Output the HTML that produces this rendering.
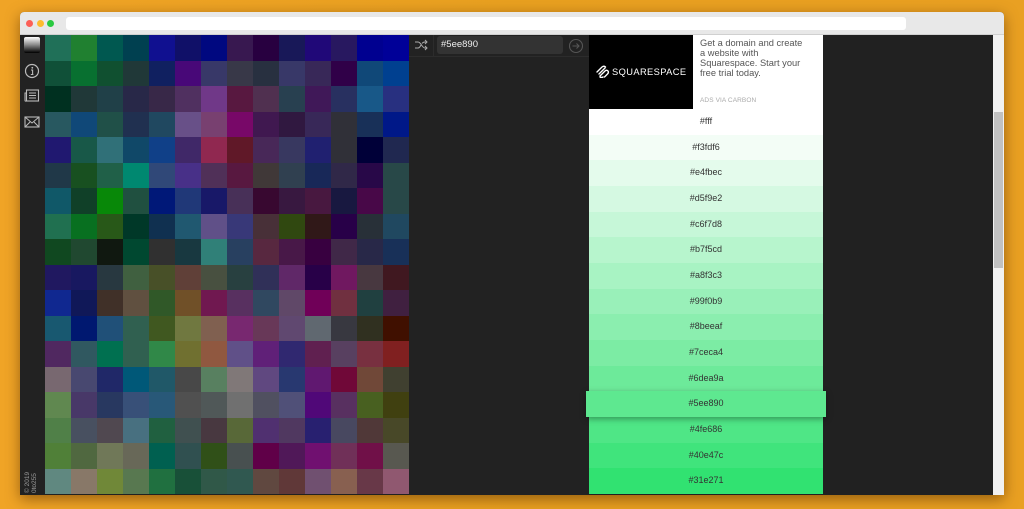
<!DOCTYPE html>
<html><head><meta charset="utf-8"><style>
*{margin:0;padding:0;box-sizing:border-box}
body{width:1024px;height:509px;overflow:hidden;background:linear-gradient(90deg,#f0a426,#e8a020 50%,#e9a022);font-family:"Liberation Sans",sans-serif;position:relative}
.win{position:absolute;left:20px;top:12px;width:984px;height:483px;background:#212121;box-shadow:0 4px 14px rgba(80,40,0,.55);border-radius:4px 4px 0 0;overflow:hidden}
.bar{position:absolute;left:0;top:0;width:984px;height:23px;background:#e8e8e8;border-bottom:1px solid #d0d0d0}
.dot{position:absolute;top:8px;width:7px;height:7px;border-radius:50%}
.url{position:absolute;left:46px;top:5px;width:840px;height:13px;background:#fff;border-radius:3px}
.side{position:absolute;left:0;top:23px;width:25px;height:460px;background:#222}
.grid{position:absolute;left:25px;top:23px;width:364px;height:459px;display:grid;grid-template-columns:repeat(14,26px);grid-template-rows:repeat(18,25.5px)}
.mid{position:absolute;left:389px;top:23px;width:180px;height:460px;background:#222}
.inp{position:absolute;left:28px;top:1px;width:126px;height:18px;background:#333;border-radius:3px;color:#eee;font-size:9.5px;line-height:18px;padding-left:4px}
.ad{position:absolute;left:569px;top:23px;width:234px;height:74px;background:#fff}
.adl{position:absolute;left:0;top:0;width:104px;height:74px;background:#000;color:#fff;font-size:9.3px;letter-spacing:.4px;line-height:74px;padding-left:23px;white-space:nowrap;overflow:hidden}
.adt{position:absolute;left:111px;top:3px;width:122px;font-size:9.3px;line-height:10px;color:#555;white-space:nowrap}
.ads{position:absolute;left:111px;top:62px;font-size:6.5px;color:#aaa;letter-spacing:.1px}
.list{position:absolute;left:569px;top:97px;width:234px}
.list div{height:25.67px;line-height:25.67px;text-align:center;font-size:9px;color:#333}
.sel{position:relative;left:-3px;width:240px;box-shadow:0 2px 6px rgba(0,0,0,.35);z-index:2}
.sb{position:absolute;left:973px;top:23px;width:11px;height:460px;background:#f1f1f1}
.th{position:absolute;left:1px;top:77px;width:9px;height:156px;background:#c1c1c1}
</style></head><body>
<div class="win">
<div class="bar"><div class="dot" style="left:6px;background:#fc5f57"></div><div class="dot" style="left:17px;background:#fdbb2e"></div><div class="dot" style="left:27px;background:#29c940"></div><div class="url"></div></div>
<div class="side">
<div style="position:absolute;left:4px;top:2px;width:16px;height:16px;border-radius:2px;background:linear-gradient(#fff,#888 50%,#000)"></div>
<svg style="position:absolute;left:4px;top:28px" width="16" height="16" viewBox="0 0 16 16"><circle cx="8" cy="8" r="6.5" fill="none" stroke="#bbb" stroke-width="1.2"/><circle cx="8.3" cy="4.8" r=".9" fill="#bbb"/><path d="M7 7h1.6v4.5M6.8 11.5h2.6" stroke="#bbb" stroke-width="1.1" fill="none"/></svg>
<svg style="position:absolute;left:4px;top:54px" width="16" height="14" viewBox="0 0 16 14"><rect x="2.5" y="1" width="12" height="11" fill="none" stroke="#bbb" stroke-width="1.1"/><path d="M2.5 4H1v7.5q0 1 1.5 .5M5 4h7M5 6.5h7M5 9h7" stroke="#bbb" stroke-width="1" fill="none"/></svg>
<svg style="position:absolute;left:4px;top:81px" width="16" height="12" viewBox="0 0 16 12"><rect x="1" y="1" width="14" height="10" fill="none" stroke="#bbb" stroke-width="1.1"/><path d="M1 1l7 6 7-6M1 11l5-5M15 11l-5-5" stroke="#bbb" stroke-width="1" fill="none"/></svg>
<div style="position:absolute;left:4px;top:420px;width:20px;height:40px;"><div style="transform:rotate(-90deg);transform-origin:0 0;position:absolute;left:0;top:38px;font-size:6.5px;line-height:7px;color:#999;white-space:nowrap">© 2019<br>0to255</div></div>
</div>
<div class="grid">
<div style="background:#207058"></div><div style="background:#208030"></div><div style="background:#005850"></div><div style="background:#004050"></div><div style="background:#101090"></div><div style="background:#101068"></div><div style="background:#000880"></div><div style="background:#381850"></div><div style="background:#280040"></div><div style="background:#181858"></div><div style="background:#200878"></div><div style="background:#281860"></div><div style="background:#000090"></div><div style="background:#000098"></div>
<div style="background:#105038"></div><div style="background:#087030"></div><div style="background:#105030"></div><div style="background:#203838"></div><div style="background:#102060"></div><div style="background:#480878"></div><div style="background:#383868"></div><div style="background:#383848"></div><div style="background:#283040"></div><div style="background:#383868"></div><div style="background:#382858"></div><div style="background:#300048"></div><div style="background:#104878"></div><div style="background:#004090"></div>
<div style="background:#003020"></div><div style="background:#203838"></div><div style="background:#204048"></div><div style="background:#282848"></div><div style="background:#382848"></div><div style="background:#503060"></div><div style="background:#703888"></div><div style="background:#581840"></div><div style="background:#503050"></div><div style="background:#284050"></div><div style="background:#401858"></div><div style="background:#283060"></div><div style="background:#185888"></div><div style="background:#283080"></div>
<div style="background:#285860"></div><div style="background:#104878"></div><div style="background:#205048"></div><div style="background:#203050"></div><div style="background:#204860"></div><div style="background:#685088"></div><div style="background:#784070"></div><div style="background:#780868"></div><div style="background:#401850"></div><div style="background:#301840"></div><div style="background:#382858"></div><div style="background:#303038"></div><div style="background:#183058"></div><div style="background:#001888"></div>
<div style="background:#201870"></div><div style="background:#185848"></div><div style="background:#307078"></div><div style="background:#104868"></div><div style="background:#104088"></div><div style="background:#402868"></div><div style="background:#902850"></div><div style="background:#601828"></div><div style="background:#482858"></div><div style="background:#383860"></div><div style="background:#202070"></div><div style="background:#303038"></div><div style="background:#000038"></div><div style="background:#202850"></div>
<div style="background:#203848"></div><div style="background:#185020"></div><div style="background:#206048"></div><div style="background:#008870"></div><div style="background:#304878"></div><div style="background:#483088"></div><div style="background:#503058"></div><div style="background:#581840"></div><div style="background:#403838"></div><div style="background:#304050"></div><div style="background:#182858"></div><div style="background:#302848"></div><div style="background:#280848"></div><div style="background:#284848"></div>
<div style="background:#105868"></div><div style="background:#104028"></div><div style="background:#088808"></div><div style="background:#205040"></div><div style="background:#001878"></div><div style="background:#203878"></div><div style="background:#181868"></div><div style="background:#483058"></div><div style="background:#380830"></div><div style="background:#381840"></div><div style="background:#481840"></div><div style="background:#181840"></div><div style="background:#480848"></div><div style="background:#284848"></div>
<div style="background:#207050"></div><div style="background:#087020"></div><div style="background:#285818"></div><div style="background:#003828"></div><div style="background:#103050"></div><div style="background:#205870"></div><div style="background:#605088"></div><div style="background:#383878"></div><div style="background:#483038"></div><div style="background:#304810"></div><div style="background:#301818"></div><div style="background:#280048"></div><div style="background:#283038"></div><div style="background:#204860"></div>
<div style="background:#104820"></div><div style="background:#204830"></div><div style="background:#101810"></div><div style="background:#004830"></div><div style="background:#303030"></div><div style="background:#183840"></div><div style="background:#308078"></div><div style="background:#284060"></div><div style="background:#582840"></div><div style="background:#481848"></div><div style="background:#380040"></div><div style="background:#402848"></div><div style="background:#282848"></div><div style="background:#183058"></div>
<div style="background:#201860"></div><div style="background:#181860"></div><div style="background:#283840"></div><div style="background:#406040"></div><div style="background:#485028"></div><div style="background:#604038"></div><div style="background:#485040"></div><div style="background:#284040"></div><div style="background:#303058"></div><div style="background:#602868"></div><div style="background:#280048"></div><div style="background:#701860"></div><div style="background:#483840"></div><div style="background:#401820"></div>
<div style="background:#102890"></div><div style="background:#101858"></div><div style="background:#403028"></div><div style="background:#605040"></div><div style="background:#305828"></div><div style="background:#705028"></div><div style="background:#701850"></div><div style="background:#583060"></div><div style="background:#304860"></div><div style="background:#604868"></div><div style="background:#700058"></div><div style="background:#703040"></div><div style="background:#204040"></div><div style="background:#402040"></div>
<div style="background:#185870"></div><div style="background:#001870"></div><div style="background:#205078"></div><div style="background:#306050"></div><div style="background:#405820"></div><div style="background:#707840"></div><div style="background:#806050"></div><div style="background:#782870"></div><div style="background:#683858"></div><div style="background:#604870"></div><div style="background:#606870"></div><div style="background:#383840"></div><div style="background:#303020"></div><div style="background:#401000"></div>
<div style="background:#502860"></div><div style="background:#305860"></div><div style="background:#007050"></div><div style="background:#306050"></div><div style="background:#308848"></div><div style="background:#707030"></div><div style="background:#905840"></div><div style="background:#605088"></div><div style="background:#602078"></div><div style="background:#302870"></div><div style="background:#602050"></div><div style="background:#584060"></div><div style="background:#783040"></div><div style="background:#802020"></div>
<div style="background:#786870"></div><div style="background:#484870"></div><div style="background:#202868"></div><div style="background:#005878"></div><div style="background:#205868"></div><div style="background:#484848"></div><div style="background:#588060"></div><div style="background:#807878"></div><div style="background:#604880"></div><div style="background:#283870"></div><div style="background:#601870"></div><div style="background:#700838"></div><div style="background:#704838"></div><div style="background:#404030"></div>
<div style="background:#608850"></div><div style="background:#483868"></div><div style="background:#283860"></div><div style="background:#385078"></div><div style="background:#285878"></div><div style="background:#505050"></div><div style="background:#505858"></div><div style="background:#707070"></div><div style="background:#505060"></div><div style="background:#505078"></div><div style="background:#500878"></div><div style="background:#583060"></div><div style="background:#486020"></div><div style="background:#404010"></div>
<div style="background:#508048"></div><div style="background:#485060"></div><div style="background:#504850"></div><div style="background:#487080"></div><div style="background:#206040"></div><div style="background:#405050"></div><div style="background:#483840"></div><div style="background:#586838"></div><div style="background:#503070"></div><div style="background:#503860"></div><div style="background:#282070"></div><div style="background:#484860"></div><div style="background:#503838"></div><div style="background:#484828"></div>
<div style="background:#508038"></div><div style="background:#506840"></div><div style="background:#707858"></div><div style="background:#686858"></div><div style="background:#006050"></div><div style="background:#305050"></div><div style="background:#305018"></div><div style="background:#485050"></div><div style="background:#600048"></div><div style="background:#501858"></div><div style="background:#701070"></div><div style="background:#703058"></div><div style="background:#701048"></div><div style="background:#585850"></div>
<div style="background:#608880"></div><div style="background:#887868"></div><div style="background:#708838"></div><div style="background:#587850"></div><div style="background:#207040"></div><div style="background:#185038"></div><div style="background:#305848"></div><div style="background:#305850"></div><div style="background:#604840"></div><div style="background:#603838"></div><div style="background:#705070"></div><div style="background:#886050"></div><div style="background:#683848"></div><div style="background:#905870"></div>
</div>
<div class="mid">
<div style="position:absolute;left:0;top:0;width:180px;height:22px;border-bottom:1px solid #2c2c2c"></div>
<div style="position:absolute;left:24px;top:0;width:1px;height:22px;background:#2c2c2c"></div>
<svg style="position:absolute;left:5px;top:4px" width="14" height="12" viewBox="0 0 14 12"><path d="M1 3h3c3 0 4 6 7 6h2M1 9h3c1.5 0 2.300-1.5 3-3M8 4.5C8.7 3.5 9.5 3 11 3h2M11 1l2 2-2 2M11 7l2 2-2 2" stroke="#aaa" stroke-width="1" fill="none"/></svg>
<div class="inp">#5ee890</div>
<svg style="position:absolute;left:159px;top:3px" width="16" height="16" viewBox="0 0 16 16"><circle cx="8" cy="8" r="6.5" fill="none" stroke="#555" stroke-width="1.1"/><path d="M4.5 8h6.5M8.5 5.5L11 8l-2.5 2.5" stroke="#555" stroke-width="1.1" fill="none"/></svg>
</div>
<div class="ad">
<div class="adl"><svg style="position:absolute;left:6px;top:30px" width="15" height="13" viewBox="0 0 15 13"><path d="M2 7l5-5q2-1.5 3.5 0M4 9l6-6M5 11l5-5q1.5-1.5 3 0q1 1.5-.5 3l-3 3M8 12q-1.5 1-3 0" stroke="#fff" stroke-width="1.4" fill="none" stroke-linecap="round"/></svg>SQUARESPACE</div>
<div class="adt">Get a domain and create<br>a website with<br>Squarespace. Start your<br>free trial today.</div>
<div class="ads">ADS VIA CARBON</div>
</div>
<div class="list">
<div style="background:#fff">#fff</div>
<div style="background:#f3fdf6">#f3fdf6</div>
<div style="background:#e4fbec">#e4fbec</div>
<div style="background:#d5f9e2">#d5f9e2</div>
<div style="background:#c6f7d8">#c6f7d8</div>
<div style="background:#b7f5cd">#b7f5cd</div>
<div style="background:#a8f3c3">#a8f3c3</div>
<div style="background:#99f0b9">#99f0b9</div>
<div style="background:#8beeaf">#8beeaf</div>
<div style="background:#7ceca4">#7ceca4</div>
<div style="background:#6dea9a">#6dea9a</div>
<div class="sel" style="background:#5ee890">#5ee890</div>
<div style="background:#4fe686">#4fe686</div>
<div style="background:#40e47c">#40e47c</div>
<div style="background:#31e271">#31e271</div>
</div>
<div class="sb"><div class="th"></div></div>
</div>
</body></html>
